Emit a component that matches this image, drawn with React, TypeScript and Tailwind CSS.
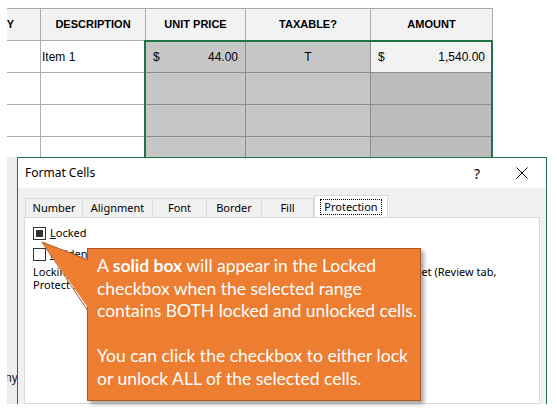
import React from "react";

type Cell = { w: string; bg?: string; content?: React.ReactNode; line?: string; end?: boolean };

// widths include the 1px right gridline
const colW = ["w-[34px]", "w-[105px]", "w-[100px]", "w-[125px]", "w-[122px]"];

function Money({ value }: { value: string }) {
  return (
    <div className="flex w-full justify-between px-[7px]">
      <span>$</span>
      <span>{value}</span>
    </div>
  );
}

function GridRow({ cells, header }: { cells: Cell[]; header?: boolean }) {
  return (
    <div className={`flex h-[32px] ${header ? "text-[11px]" : "text-[12px]"}`}>
      {cells.map((c, i) => (
        <div
          key={i}
          className={`${c.w} ${c.bg ?? "bg-white"} ${c.line ?? "border-[#ababab]"} flex shrink-0 items-center overflow-hidden whitespace-nowrap border-r border-b ${
            c.end ? "justify-end font-bold" : header ? "justify-center font-bold" : ""
          }`}
        >
          {c.content}
        </div>
      ))}
    </div>
  );
}

function Sheet() {
  const header: Cell[] = [
    { w: colW[0], bg: "bg-[#f2f2f2]", end: true, content: <span className="shrink-0 pr-[26px]">QTY</span> },
    { w: colW[1], bg: "bg-[#f2f2f2]", content: "DESCRIPTION" },
    { w: colW[2], bg: "bg-[#f2f2f2]", content: "UNIT PRICE" },
    { w: colW[3], bg: "bg-[#f2f2f2]", content: "TAXABLE?" },
    { w: colW[4], bg: "bg-[#f2f2f2]", content: "AMOUNT" },
  ];
  const first: Cell[] = [
    { w: colW[0] },
    { w: colW[1], content: <span className="pl-[1px]">Item 1</span> },
    { w: colW[2], bg: "bg-[#c6c6c6]", line: "border-[#8c8c8c]", content: <Money value="44.00" /> },
    { w: colW[3], bg: "bg-[#c6c6c6]", line: "border-[#8c8c8c]", content: <span className="w-full text-center">T</span> },
    { w: colW[4], bg: "bg-[#f2f2f2]", line: "border-[#8c8c8c]", content: <Money value="1,540.00" /> },
  ];
  const blank: Cell[] = [
    { w: colW[0] },
    { w: colW[1] },
    { w: colW[2], bg: "bg-[#c6c6c6]", line: "border-[#8c8c8c]" },
    { w: colW[3], bg: "bg-[#c6c6c6]", line: "border-[#8c8c8c]" },
    { w: colW[4], bg: "bg-[#bcbcbc]", line: "border-[#8c8c8c]" },
  ];

  return (
    <div className="relative ml-[7px] mt-[8px] w-[486px] border-t border-[#ababab] font-['Liberation_Sans',Arial,sans-serif] text-black">
      <GridRow cells={header} header />
      <GridRow cells={first} />
      <GridRow cells={blank} />
      <GridRow cells={blank} />
      <GridRow cells={blank} />
      <GridRow cells={blank} />
      {/* selected range outline */}
      <div className="absolute left-[137px] top-[31px] h-[200px] w-[349px] border-2 border-[#217346]" />
    </div>
  );
}

const tabs = [
  { label: "Number", w: "w-[58px]" },
  { label: "Alignment", w: "w-[70px]" },
  { label: "Font", w: "w-[54px]" },
  { label: "Border", w: "w-[55px]" },
  { label: "Fill", w: "w-[52px]" },
];

function Checkbox({ mixed }: { mixed?: boolean }) {
  return (
    <div className="flex h-[13px] w-[13px] shrink-0 items-center justify-center border border-[#333] bg-white">
      {mixed && <div className="h-[7px] w-[7px] bg-[#333]" />}
    </div>
  );
}

function FormatCells() {
  return (
    <div className="absolute left-[17px] top-[157px] flex h-[247px] w-[530px] flex-col border-x border-t border-[#217346] bg-[#f0f0f0] font-['Noto_Sans',sans-serif] text-[11px] text-black">
      <div className="flex h-[30px] shrink-0 items-center bg-white pl-[7px] pr-[12px] text-[12px]">
        <span>Format Cells</span>
        <span className="ml-auto mr-[36px] text-[14px]">?</span>
        <svg width="12" height="12" viewBox="0 0 12 12" className="mr-[6px]">
          <path d="M0.5 0.5 L11.5 11.5 M11.5 0.5 L0.5 11.5" stroke="#000" strokeWidth="1" />
        </svg>
      </div>

      <div className="flex flex-1 flex-col px-[6px] pt-[7px]">
        <div className="flex h-[22px] items-end pl-[1px]">
          {tabs.map((t, i) => (
            <div
              key={t.label}
              className={`${t.w} flex h-[19px] items-center justify-center border-t border-r border-[#d9d9d9] ${i === 0 ? "border-l" : ""}`}
            >
              {t.label}
            </div>
          ))}
          <div className="-mb-px flex h-[23px] w-[74px] items-center justify-center border-x border-t border-[#d9d9d9] bg-white">
            <span className="border border-dotted border-black px-[3px] leading-[14px]">Protection</span>
          </div>
        </div>

        <div className="flex-1 border border-[#d9d9d9] bg-white pl-[8px] pt-[9px]">
          <div className="flex h-[13px] items-center gap-[4px]">
            <Checkbox mixed />
            <span>
              <span className="underline">L</span>ocked
            </span>
          </div>
          <div className="mt-[8px] flex h-[13px] items-center gap-[4px]">
            <Checkbox />
            <span>
              <span className="underline">H</span>idden
            </span>
          </div>
          <p className="mt-[4px] w-[470px] leading-[13px]">
            Locking cells or hiding formulas has no effect until you protect the worksheet (Review tab,
            Protect Sheet group, Protect Sheet button).
          </p>
        </div>
      </div>
    </div>
  );
}

function Callout() {
  return (
    <>
      <div className="absolute left-[87px] top-[248px] h-[153px] w-[334px] border border-[#ae5a21] bg-[#ed7d31] pl-[9px] pt-[6px] font-['Lato',sans-serif] text-[17.5px] leading-[22.5px] text-white shadow-[3px_3px_4px_rgba(0,0,0,0.35)]">
        <div className="whitespace-nowrap">
          A <b>solid box</b> will appear in the Locked
        </div>
        <div className="whitespace-nowrap">checkbox when the selected range</div>
        <div className="whitespace-nowrap">contains BOTH locked and unlocked cells.</div>
        <div className="h-[22.5px]" />
        <div className="whitespace-nowrap">You can click the checkbox to either lock</div>
        <div className="whitespace-nowrap">or unlock ALL of the selected cells.</div>
      </div>
      {/* pointer wedge */}
      <svg className="absolute left-[40px] top-[239px]" width="52" height="76" viewBox="0 0 52 76">
        <polygon points="2,3 51,22 51,73" fill="#ed7d31" />
        <polyline points="48,20.8 2,3 48,72" fill="none" stroke="#ae5a21" strokeWidth="1" />
      </svg>
    </>
  );
}

export default function App() {
  return (
    <div className="relative h-[416px] w-[557px] overflow-hidden bg-white">
      <Sheet />
      {/* strip of sheet still showing left of the dialog */}
      <div className="absolute left-[7px] top-[157px] h-[247px] w-[10px] overflow-hidden bg-[#ededed] font-['Liberation_Sans',Arial,sans-serif] text-[12px] text-[#222]">
        <span className="absolute left-[-2px] top-[212px]">ny</span>
      </div>
      <FormatCells />
      <Callout />
    </div>
  );
}
